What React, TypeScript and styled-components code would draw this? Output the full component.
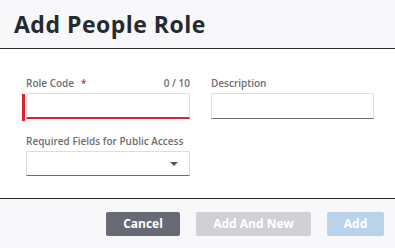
import React from 'react';
import styled, { createGlobalStyle } from 'styled-components';

const GlobalStyle = createGlobalStyle`
  html, body {
    margin: 0;
    padding: 0;
    background: #ffffff;
    font-family: 'Open Sans', 'Noto Sans', Arial, sans-serif;
  }
`;

const Dialog = styled.div`
  width: 395px;
  height: 248px;
  display: flex;
  flex-direction: column;
  overflow: hidden;
`;

const Header = styled.div`
  height: 49px;
  background: #f8f8fa;
  border-bottom: 1.5px solid #2a2a2e;
  display: flex;
  align-items: center;
  padding: 0 14px;
  box-sizing: border-box;
`;

const Title = styled.h1`
  margin: 0;
  font-size: 23px;
  font-weight: 700;
  color: #26292e;
  letter-spacing: 0.5px;
`;

const Body = styled.div`
  flex: 1;
  background: #ffffff;
  padding: 28px 22px 0 26px;
  display: grid;
  grid-template-columns: 164px 163px;
  column-gap: 21px;
  row-gap: 16px;
  align-content: start;
`;

const Field = styled.div`
  display: flex;
  flex-direction: column;
  position: relative;
`;

const LabelRow = styled.div`
  display: flex;
  justify-content: space-between;
  align-items: center;
  height: 12px;
  margin-bottom: 4px;
`;

const Label = styled.label`
  font-size: 10px;
  font-weight: 600;
  color: #6e6e72;
`;

const Star = styled.span`
  color: #d9232e;
  margin-left: 7px;
`;

const Counter = styled.span`
  font-size: 10px;
  font-weight: 600;
  color: #6e6e72;
`;

const Input = styled.div<{ $invalid?: boolean }>`
  height: 26px;
  box-sizing: border-box;
  border: 1px solid #dedee0;
  border-bottom: ${({ $invalid }) => ($invalid ? '2px solid #d9232e' : '1px solid #6e6e72')};
  border-radius: 2px 2px 0 0;
  background: #ffffff;
  position: relative;
`;

const ErrorBar = styled.span`
  position: absolute;
  left: -5px;
  top: 0;
  width: 3px;
  height: 27px;
  background: #d9232e;
`;

const Select = styled(Input)`
  display: flex;
  align-items: center;
  justify-content: flex-end;
  padding-right: 11px;
  height: 25px;
`;

const Caret = styled.span`
  width: 0;
  height: 0;
  border-left: 4px solid transparent;
  border-right: 4px solid transparent;
  border-top: 4px solid #555558;
`;

const Footer = styled.div`
  height: 50px;
  background: #f8f8fa;
  border-top: 1px solid #2a2a2e;
  display: flex;
  align-items: center;
  justify-content: flex-end;
  gap: 16px;
  padding: 0 11px 0 0;
  box-sizing: border-box;
`;

const Button = styled.button<{ $bg: string; $w: number }>`
  width: ${({ $w }) => $w}px;
  height: 24px;
  border: none;
  border-radius: 2px;
  background: ${({ $bg }) => $bg};
  color: #ffffff;
  font-family: 'Open Sans', Arial, sans-serif;
  font-size: 12px;
  font-weight: 700;
  padding: 0;
  cursor: pointer;
`;

export default function App() {
  return (
    <>
      <GlobalStyle />
      <Dialog>
        <Header>
          <Title>Add People Role</Title>
        </Header>
        <Body>
          <Field>
            <LabelRow>
              <Label>
                Role Code<Star>*</Star>
              </Label>
              <Counter>0 / 10</Counter>
            </LabelRow>
            <Input $invalid>
              <ErrorBar />
            </Input>
          </Field>
          <Field>
            <LabelRow>
              <Label>Description</Label>
            </LabelRow>
            <Input />
          </Field>
          <Field>
            <LabelRow>
              <Label>Required Fields for Public Access</Label>
            </LabelRow>
            <Select>
              <Caret />
            </Select>
          </Field>
        </Body>
        <Footer>
          <Button $bg="#686b75" $w={74}>Cancel</Button>
          <Button $bg="#d0d1d4" $w={115}>Add And New</Button>
          <Button $bg="#b9d4ea" $w={57}>Add</Button>
        </Footer>
      </Dialog>
    </>
  );
}
